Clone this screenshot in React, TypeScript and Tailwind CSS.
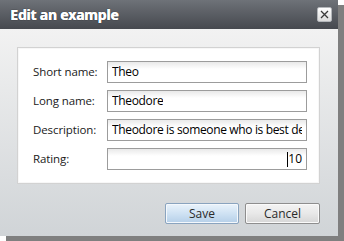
import React from "react";

const fields = [
  { label: "Short name:", value: "Theo" },
  { label: "Long name:", value: "Theodore" },
  { label: "Description:", value: "Theodore is someone who is best described as a friend" },
];

export default function App() {
  return (
    <div className="w-[344px] h-[241px] bg-white font-['Open_Sans',sans-serif]">
      <div className="w-[338px] h-[236px] flex flex-col shadow-[6px_5px_0_#7f7f7f]">
        {/* title bar */}
        <div className="h-[29px] flex items-center justify-between pl-[10px] pr-[6px] bg-gradient-to-b from-[#6e7278] to-[#46494f]">
          <span className="text-white font-['Noto_Sans',sans-serif] font-bold text-[14px] leading-none tracking-[-0.2px] [text-shadow:0.5px_0_0_#fff,0_0_1px_#000]">
            Edit an example
          </span>
          <div className="w-[15px] h-[15px] rounded-[2px] border border-[#b4b7bb] bg-gradient-to-b from-white to-[#dcdcdc] flex items-center justify-center">
            <svg width="9" height="9" viewBox="0 0 9 9">
              <path d="M1 1 L8 8 M8 1 L1 8" stroke="#3a3a3a" strokeWidth="1.3" />
            </svg>
          </div>
        </div>

        {/* body */}
        <div className="flex-1 flex flex-col bg-gradient-to-b from-[#f2f2f2] to-[#d0d4d7] pt-[18px] pl-[17px] pr-[18px]">
          <div className="w-[303px] border border-[#d2d2d2] bg-white pt-[13px] pb-[13px] pl-[15px] pr-[12px] flex flex-col gap-[7px] shadow-[inset_0_0_0_1px_#f7f7f7]">
            {fields.map((f) => (
              <div key={f.label} className="flex items-center h-[22px]">
                <span className="w-[74px] text-[11.5px] tracking-[-0.1px] text-[#1a1a1a]">{f.label}</span>
                <div className="w-[200px] h-[22px] border border-[#9c9c9c] bg-gradient-to-b from-[#e9e9e9] via-white to-white via-[35%] flex items-center pl-[4px] pr-[4px] overflow-hidden">
                  <span className="text-[12px] tracking-[-0.35px] text-black whitespace-nowrap overflow-hidden">{f.value}</span>
                </div>
              </div>
            ))}
            <div className="flex items-center h-[22px]">
              <span className="w-[74px] text-[11.5px] tracking-[-0.1px] text-[#1a1a1a]">Rating:</span>
              <div className="w-[200px] h-[22px] border border-[#9c9c9c] bg-gradient-to-b from-[#e9e9e9] via-white to-white via-[35%] flex items-center justify-end pr-[4px]">
                <span className="w-px h-[15px] bg-black" />
                <span className="text-[12px] text-black">10</span>
              </div>
            </div>
          </div>

          <div className="flex justify-end gap-[6px] mt-[19px] pr-[-2px]">
            <button className="w-[74px] h-[21px] border border-[#8aa4bf] rounded-[2px] bg-gradient-to-b from-[#eaf3fb] via-[#cfe2f3] to-[#b5cfe8] text-[12px] text-[#2a2a2a] flex items-center justify-center shadow-[inset_0_0_0_1px_#f4f8fc]">
              Save
            </button>
            <button className="w-[75px] h-[21px] border border-[#8e8e8e] rounded-[2px] bg-gradient-to-b from-[#f4f4f4] via-[#e8e8e8] to-[#d6d6d6] text-[12px] text-[#2a2a2a] flex items-center justify-center shadow-[inset_0_0_0_1px_#fafafa]">
              Cancel
            </button>
          </div>
        </div>
      </div>
    </div>
  );
}
